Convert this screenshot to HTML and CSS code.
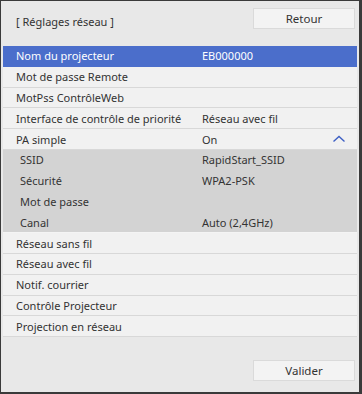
FILE: index.html
```html
<!DOCTYPE html>
<html>
<head>
<meta charset="utf-8">
<link rel="stylesheet" href="styles.css">
</head>
<body>
<div class="frame">
  <div class="header">
    <span class="title">[ Réglages réseau ]</span>
    <div class="btn btn-top">Retour</div>
  </div>
  <div class="list">
    <div class="row selected"><span class="label">Nom du projecteur</span><span class="value">EB000000</span></div>
    <div class="row"><span class="label">Mot de passe Remote</span></div>
    <div class="row"><span class="label">MotPss ContrôleWeb</span></div>
    <div class="row"><span class="label">Interface de contrôle de priorité</span><span class="value">Réseau avec fil</span></div>
    <div class="row"><span class="label">PA simple</span><span class="value">On</span>
      <svg class="chev" width="14" height="8" viewBox="0 0 14 8"><polyline points="1.5,6.5 7,1.5 12.5,6.5" fill="none" stroke="#3d5fc4" stroke-width="1.4"/></svg>
    </div>
    <div class="row sub"><span class="label">SSID</span><span class="value">RapidStart_SSID</span></div>
    <div class="row sub"><span class="label">Sécurité</span><span class="value">WPA2-PSK</span></div>
    <div class="row sub"><span class="label">Mot de passe</span></div>
    <div class="row sub last-sub"><span class="label">Canal</span><span class="value">Auto (2,4GHz)</span></div>
    <div class="row"><span class="label">Réseau sans fil</span></div>
    <div class="row"><span class="label">Réseau avec fil</span></div>
    <div class="row"><span class="label">Notif. courrier</span></div>
    <div class="row"><span class="label">Contrôle Projecteur</span></div>
    <div class="row"><span class="label">Projection en réseau</span></div>
  </div>
  <div class="footer">
    <div class="btn">Valider</div>
  </div>
</div>
</body>
</html>
```
FILE: styles.css
```css
html, body {
  margin: 0;
  padding: 0;
  background: #e8e8e8;
}
.frame {
  width: 362px;
  height: 394px;
  box-sizing: border-box;
  border: 1px solid #3a3a3a;
  border-right-width: 3px;
  border-bottom-width: 2px;
  background: #e8e8e8;
  padding: 0 2px;
  display: flex;
  flex-direction: column;
  font-family: "Noto Sans", "Open Sans", sans-serif;
  font-size: 11px;
  color: #333;
}
.header {
  height: 45px;
  display: flex;
  justify-content: space-between;
  align-items: flex-start;
  padding: 0 2px 0 13px;
  box-sizing: border-box;
}
.title {
  margin-top: 13px;
  line-height: 16px;
}
.btn {
  width: 102px;
  height: 21px;
  box-sizing: border-box;
  border: 1px solid #dadada;
  background: #f3f3f3;
  display: flex;
  align-items: center;
  justify-content: center;
  font-size: 11.5px;
}
.btn-top {
  margin-top: 7px;
}
.list {
  display: flex;
  flex-direction: column;
}
.row {
  height: 20.8px;
  box-sizing: border-box;
  border-bottom: 1px solid #d8d8d8;
  background: #f1f1f1;
  display: flex;
  align-items: center;
  padding-left: 13px;
  position: relative;
}
.row .label {
  width: 186px;
  flex: none;
}
.row.selected {
  background: #4b6ecb;
  color: #fff;
  border-bottom-color: #4b6ecb;
}
.row.sub {
  background: #d3d3d3;
  border-bottom-color: #d3d3d3;
  padding-left: 17px;
}
.row.sub .label {
  width: 182px;
}
.row.last-sub {
  border-bottom-color: #f4f4f4;
}
.chev {
  position: absolute;
  right: 11px;
  top: 6px;
}
.footer {
  flex: 1;
  display: flex;
  justify-content: flex-end;
  align-items: flex-end;
  padding: 0 2px 11px 0;
}
```
